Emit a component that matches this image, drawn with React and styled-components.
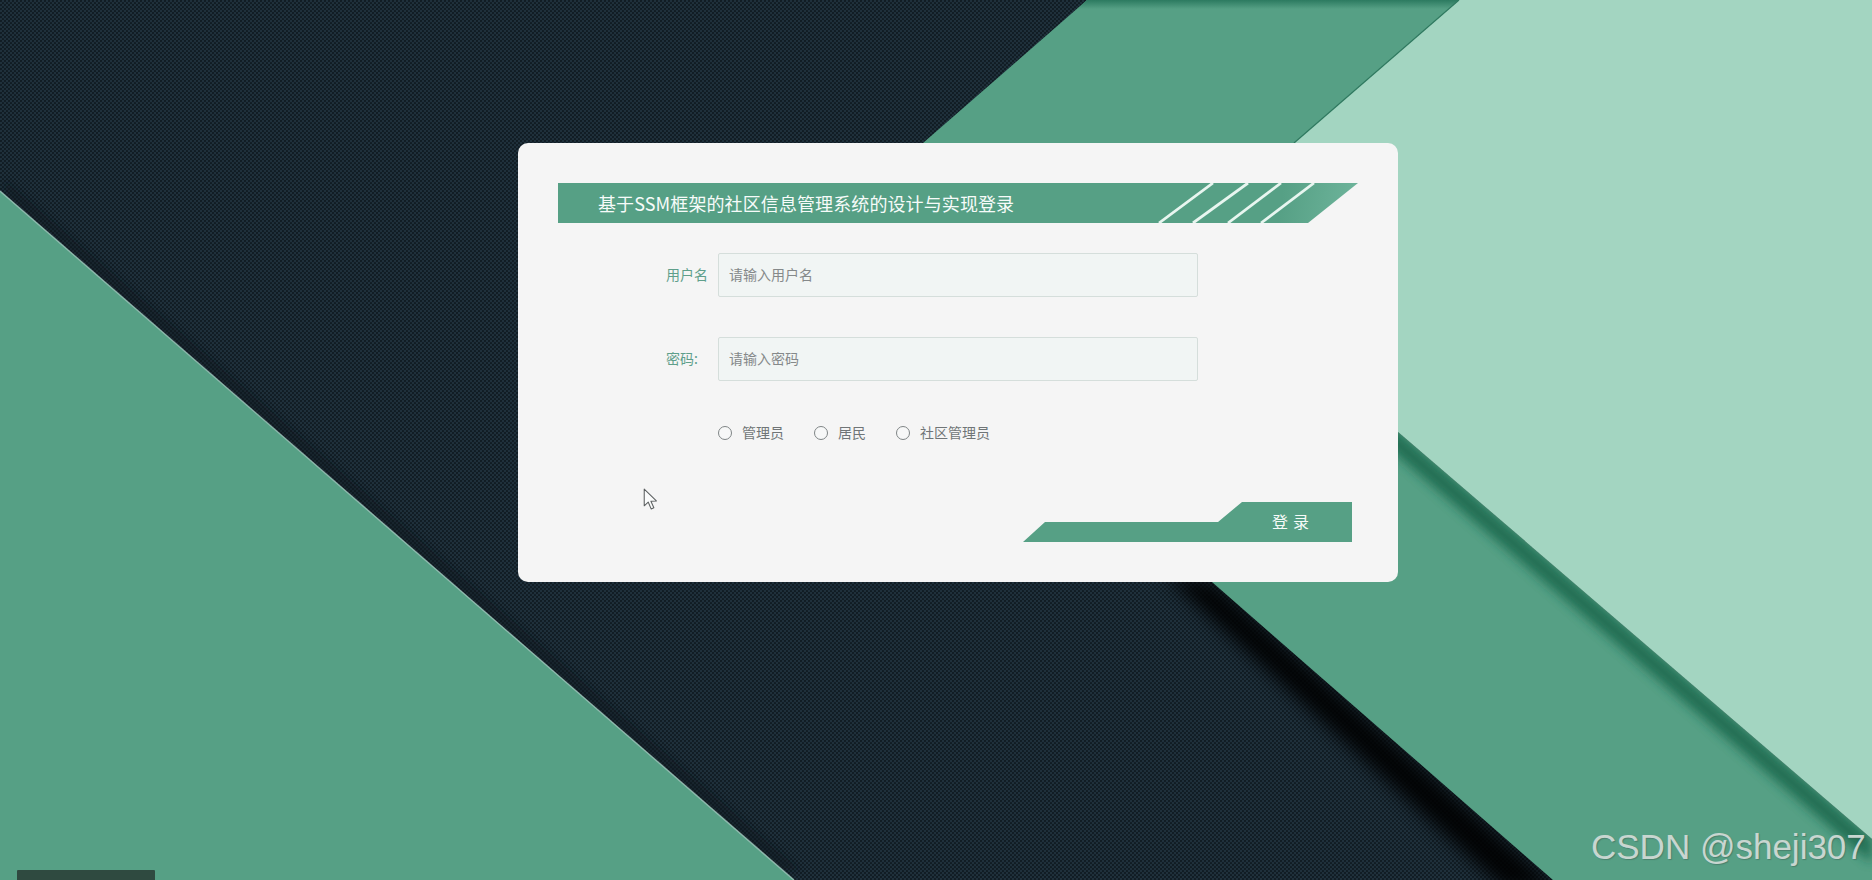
import React from "react";
import styled, { createGlobalStyle } from "styled-components";

const Global = createGlobalStyle`
  html, body { margin: 0; padding: 0; height: 100%; overflow: hidden; }
  body { font-family: "Noto Sans CJK SC", "Liberation Sans", sans-serif; background: #1a2936; }
`;

const Page = styled.div`
  position: relative;
  width: 1872px;
  height: 880px;
  overflow: hidden;
  box-sizing: border-box;
  padding: 143px 0 0 518px;
`;

const Backdrop = styled.svg`
  position: absolute;
  inset: 0;
  width: 1872px;
  height: 880px;
`;

const Card = styled.form`
  position: relative;
  box-sizing: border-box;
  width: 880px;
  height: 439px;
  padding: 40px;
  background: #f5f5f5;
  border-radius: 10px;
`;

const Banner = styled.div`
  position: relative;
  width: 800px;
  height: 40px;
  display: flex;
  align-items: center;
  padding-left: 40px;
  box-sizing: border-box;
  background: linear-gradient(100deg, #56a085 0, #56a085 90%, #6fb59c 100%);
  clip-path: polygon(0 0, 100% 0, 750px 100%, 0 100%);
`;

const Title = styled.h1`
  margin: 0;
  font-size: 18px;
  line-height: 40px;
  font-weight: 400;
  letter-spacing: 0.1px;
  color: #f6fbf9;
`;

const Stripes = styled.svg`
  position: absolute;
  left: 0;
  top: 0;
  width: 800px;
  height: 40px;
`;

const Field = styled.div`
  display: flex;
  align-items: center;
  padding-left: 108px;
  margin-top: ${(p) => p.$gap}px;
`;

const Label = styled.label`
  width: 52px;
  padding-bottom: 2px;
  font-size: 14px;
  color: #5f9f8b;
`;

const TextInput = styled.input`
  box-sizing: border-box;
  width: 480px;
  height: 44px;
  padding: 0 10px 2px;
  font: inherit;
  font-size: 14px;
  color: #606266;
  background: #f1f5f4;
  border: 1px solid #d5dedb;
  border-radius: 2px;
  outline: none;
  &::placeholder { color: #85898a; opacity: 1; }
`;

const RadioRow = styled.div`
  display: flex;
  gap: 30px;
  height: 20px;
  margin-top: 42px;
  padding-left: 160px;
`;

const RadioOption = styled.label`
  display: flex;
  align-items: center;
  gap: 10px;
  padding-bottom: 2px;
  font-size: 14px;
  color: #707577;
`;

const RadioDot = styled.input`
  appearance: none;
  box-sizing: border-box;
  width: 14px;
  height: 14px;
  margin: 2px 0 0;
  border: 1px solid #7f8586;
  border-radius: 50%;
  background: #f7f8f8;
`;

const Actions = styled.div`
  display: flex;
  justify-content: flex-end;
  margin-top: 59px;
  padding-right: 6px;
`;

const Submit = styled.button`
  box-sizing: border-box;
  width: 329px;
  height: 40px;
  padding: 0 38px 2px 0;
  border: 0;
  display: flex;
  justify-content: flex-end;
  align-items: center;
  font: inherit;
  font-size: 16px;
  letter-spacing: 5px;
  color: #f6fbf9;
  background: #56a085;
  clip-path: polygon(219px 0, 100% 0, 100% 100%, 0 100%, 22px 20px, 195px 20px);
`;

const Pointer = styled.svg`
  position: absolute;
  left: 125px;
  top: 345px;
  width: 15px;
  height: 23px;
`;

const Watermark = styled.div`
  position: absolute;
  left: 1591px;
  top: 826px;
  font-family: "Liberation Sans", Arial, sans-serif;
  font-size: 35px;
  line-height: 42px;
  color: #c8d6d0;
  white-space: nowrap;
  text-shadow: 1px 1px 1px rgba(60, 90, 80, 0.45);
`;

const DockTab = styled.div`
  position: absolute;
  left: 17px;
  bottom: 0;
  width: 138px;
  height: 10px;
  background: #2f4a40;
  border-radius: 1px 1px 0 0;
`;

const BAND = "1087,0 1459,0 1178,243 1872,839 1872,880 1553,880 1212,582 923,143";

export default function App() {
  return (
    <Page>
      <Global />
      <Backdrop viewBox="0 0 1872 880" aria-hidden="true">
        <defs>
          <pattern id="weave" width="4" height="4" patternUnits="userSpaceOnUse">
            <rect width="4" height="4" fill="#1f303b" />
            <circle cx="1" cy="1" r="1.1" fill="#0f1a21" />
            <circle cx="3" cy="3" r="1.1" fill="#0f1a21" />
          </pattern>
          <filter id="soft" x="-10%" y="-10%" width="120%" height="120%">
            <feGaussianBlur stdDeviation="9" />
          </filter>
          <filter id="medium" x="-10%" y="-10%" width="120%" height="120%">
            <feGaussianBlur stdDeviation="6" />
          </filter>
          <filter id="tight" x="-10%" y="-10%" width="120%" height="120%">
            <feGaussianBlur stdDeviation="3" />
          </filter>
          <linearGradient id="bandTop" x1="0" y1="0" x2="0" y2="1">
            <stop offset="0" stopColor="#2c7a60" />
            <stop offset="1" stopColor="#2c7a60" stopOpacity="0" />
          </linearGradient>
        </defs>
        <rect width="1872" height="880" fill="url(#weave)" />
        <polygon points="1212,582 1560,890 1505,890 1165,575" fill="#020406" filter="url(#soft)" opacity="0.9" />
        <polygon points="0,191 794,880 775,880 0,205" fill="#0a141b" transform="translate(6 -10)" filter="url(#tight)" opacity="0.5" />
        <polygon points={BAND} fill="#56a085" />
        <polygon points="1087,0 1459,0 1448,9 1077,9" fill="url(#bandTop)" />
        <polygon points="1178,243 1872,839 1872,863 1178,267" fill="#1f6a50" filter="url(#medium)" opacity="0.95" />
        <polygon points="1459,0 1872,0 1872,839 1178,243" fill="#a3d5c1" />
        <line x1="1459" y1="0" x2="1294" y2="143" stroke="#2f7a60" strokeWidth="1.2" />
        <polygon points="0,191 794,880 0,880" fill="#56a085" />
        <line x1="0" y1="191" x2="794" y2="880" stroke="#a9cfc4" strokeWidth="1.4" opacity="0.75" />
      </Backdrop>
      <Card>
        <Banner>
          <Title>基于SSM框架的社区信息管理系统的设计与实现登录</Title>
          <Stripes viewBox="0 0 800 40" aria-hidden="true">
            <line x1="655" y1="0" x2="601" y2="40" stroke="#e8f6f0" strokeWidth="2.8" />
            <line x1="690" y1="0" x2="635" y2="40" stroke="#e8f6f0" strokeWidth="2.8" />
            <line x1="723" y1="0" x2="670" y2="40" stroke="#e8f6f0" strokeWidth="2.8" />
            <line x1="756" y1="0" x2="703" y2="40" stroke="#e8f6f0" strokeWidth="2.8" />
          </Stripes>
        </Banner>
        <Field $gap={30}>
          <Label htmlFor="username">用户名</Label>
          <TextInput id="username" placeholder="请输入用户名" />
        </Field>
        <Field $gap={40}>
          <Label htmlFor="password">密码:</Label>
          <TextInput id="password" placeholder="请输入密码" />
        </Field>
        <RadioRow>
          <RadioOption><RadioDot type="radio" name="role" />管理员</RadioOption>
          <RadioOption><RadioDot type="radio" name="role" />居民</RadioOption>
          <RadioOption><RadioDot type="radio" name="role" />社区管理员</RadioOption>
        </RadioRow>
        <Actions>
          <Submit type="button">登录</Submit>
        </Actions>
        <Pointer viewBox="0 0 14 22" aria-hidden="true">
          <path d="M1 1 L1 17 L4.8 13.4 L7.6 20 L10.2 18.9 L7.4 12.6 L12.6 12.4 Z" fill="#fbfcfc" stroke="#5b5f60" strokeWidth="1" strokeLinejoin="round" />
        </Pointer>
      </Card>
      <Watermark>CSDN @sheji307</Watermark>
      <DockTab />
    </Page>
  );
}
